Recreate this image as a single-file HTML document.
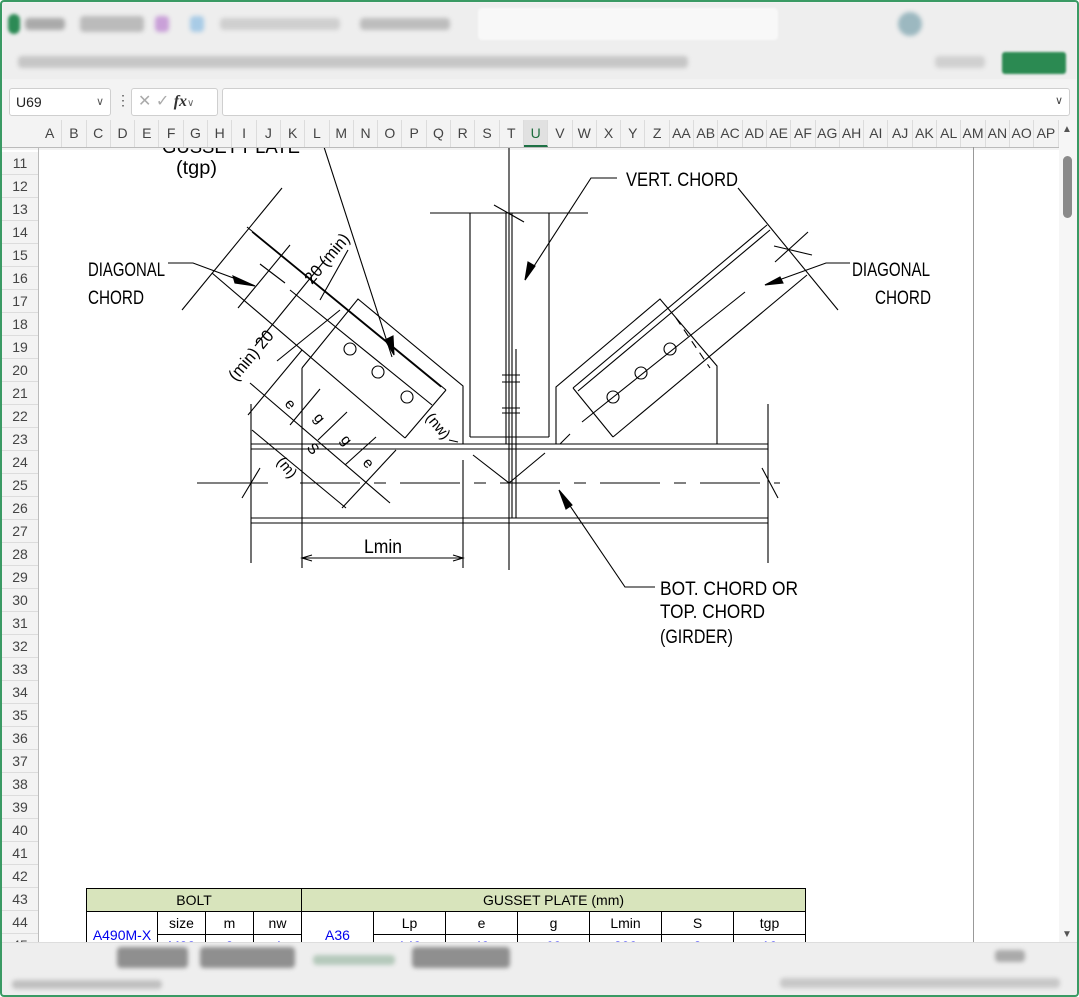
<!DOCTYPE html>
<html><head><meta charset="utf-8"><style>
*{margin:0;padding:0;box-sizing:border-box}
body{width:1079px;height:997px;overflow:hidden;background:#fff;font-family:"Liberation Sans",sans-serif;position:relative}
.abs{position:absolute}
.colh{position:absolute;top:120px;height:27px;font-size:14px;color:#444;text-align:center;line-height:27px;border-right:1px solid #dcdcdc}
.rowh{position:absolute;left:2px;width:36px;height:23px;font-size:14px;color:#444;text-align:center;line-height:23px;border-bottom:1px solid #dcdcdc}
.blob{position:absolute;background:#9a9a9a;border-radius:4px;filter:blur(2px)}
table{border-collapse:collapse;position:absolute;left:86px;top:888px;font-size:14px;table-layout:fixed}
td{border:1px solid #000;text-align:center;height:23px;padding:0}
.hd{background:#d8e4bc}
.b{color:#0000ee}
</style></head><body>
<div class="abs" style="left:2px;top:2px;width:1075px;height:78px;background:#eeeeee;filter:blur(0.5px)"></div>
<div class="abs" style="left:8px;top:14px;width:12px;height:20px;border-radius:6px;background:#2c8a55;filter:blur(1.5px)"></div>
<div class="blob" style="left:25px;top:18px;width:40px;height:12px;background:#aaa"></div>
<div class="blob" style="left:80px;top:16px;width:64px;height:16px;background:#bbb"></div>
<div class="blob" style="left:155px;top:16px;width:14px;height:16px;background:#c9a0d8"></div>
<div class="blob" style="left:190px;top:16px;width:14px;height:16px;background:#a8cbe6"></div>
<div class="blob" style="left:220px;top:18px;width:120px;height:12px;background:#cfcfcf"></div>
<div class="blob" style="left:360px;top:18px;width:90px;height:12px;background:#bdbdbd"></div>
<div class="abs" style="left:478px;top:8px;width:300px;height:32px;background:#f8f8f8;border-radius:4px;filter:blur(1px)"></div>
<div class="abs" style="left:898px;top:12px;width:24px;height:24px;border-radius:12px;background:#9cb8c0;filter:blur(2px)"></div>
<div class="blob" style="left:18px;top:56px;width:670px;height:12px;background:#c6c6c6"></div>
<div class="abs" style="left:1002px;top:52px;width:64px;height:22px;background:#2b8a52;border-radius:3px;filter:blur(1px)"></div>
<div class="blob" style="left:935px;top:56px;width:50px;height:12px;background:#d0d0d0"></div>
<div class="abs" style="left:2px;top:80px;width:1075px;height:70px;background:#f3f3f3"></div>
<div class="abs" style="left:9px;top:88px;width:102px;height:28px;background:#fff;border:1px solid #cfcfcf;border-radius:3px;font-size:14px;line-height:26px;padding-left:6px;color:#222">U69<span style="position:absolute;right:6px;font-size:11px;color:#555">&#8744;</span></div>
<div class="abs" style="left:116px;top:92px;font-size:14px;color:#555">&#8942;</div>
<div class="abs" style="left:131px;top:88px;width:87px;height:28px;background:#fff;border:1px solid #cfcfcf;border-radius:3px;font-size:16px;line-height:26px;color:#aaa;padding-left:6px">&#10005; &#10003; <i style="color:#333;font-family:'Liberation Serif',serif;font-weight:bold">fx</i><span style="font-size:10px;color:#666">&#8744;</span></div>
<div class="abs" style="left:222px;top:88px;width:848px;height:28px;background:#fff;border:1px solid #cfcfcf;border-radius:3px"><span style="position:absolute;right:6px;top:5px;font-size:11px;color:#444">&#8744;</span></div>
<div class="abs" style="left:2px;top:120px;width:36px;height:27px;background:#f3f3f3"></div>
<div id="cols"></div>
<div class="abs" style="left:2px;top:147px;width:1057px;height:1px;background:#bbb"></div>
<div class="abs" style="left:38px;top:147px;width:1px;height:795px;background:#bbb"></div>
<div class="abs" style="left:973px;top:147px;width:1px;height:795px;background:#999"></div>
<div class="abs" style="left:1059px;top:120px;width:18px;height:822px;background:#f6f6f6"></div>
<div class="abs" style="left:1063px;top:156px;width:9px;height:62px;background:#8a8a8a;border-radius:5px"></div>
<div class="abs" style="left:1062px;top:124px;font-size:10px;color:#555">&#9650;</div>
<div class="abs" style="left:1062px;top:929px;font-size:10px;color:#555">&#9660;</div>
<div id="rows"></div>
<svg class="abs" style="left:0;top:0" width="1079" height="942" viewBox="0 0 1079 942" stroke="#000" fill="none" stroke-width="1.1">
<defs><clipPath id="c"><rect x="39" y="148" width="934" height="794"/></clipPath></defs>
<g clip-path="url(#c)">
<text x="162" y="153" textLength="138" lengthAdjust="spacingAndGlyphs" fill="#000" stroke="none" font-size="19" font-family="Liberation Sans, sans-serif">GUSSET PLATE</text>
<line x1="251" y1="444" x2="768" y2="444"/><line x1="251" y1="449" x2="768" y2="449"/>
<line x1="251" y1="518" x2="768" y2="518"/><line x1="251" y1="523" x2="768" y2="523"/>
<line x1="251" y1="404" x2="251" y2="563"/><line x1="768" y1="404" x2="768" y2="563"/>
<line x1="302" y1="368" x2="302" y2="568"/><line x1="463" y1="460" x2="463" y2="568"/>
<line x1="197" y1="483" x2="268" y2="483"/>
<line x1="300" y1="483" x2="780" y2="483" stroke-dasharray="60,14,12,14"/>
<line x1="242" y1="498" x2="260" y2="468"/><line x1="762" y1="468" x2="778" y2="498"/>
<line x1="509" y1="148" x2="509" y2="570"/>
<line x1="430" y1="213" x2="588" y2="213"/>
<line x1="470" y1="213" x2="470" y2="437"/><line x1="549" y1="213" x2="549" y2="437"/>
<line x1="470" y1="437" x2="549" y2="437"/>
<line x1="506" y1="213" x2="506" y2="444"/><line x1="512" y1="213" x2="512" y2="518"/>
<line x1="516" y1="349" x2="516" y2="518"/>
<line x1="502" y1="375" x2="520" y2="375"/><line x1="502" y1="382" x2="520" y2="382"/>
<line x1="502" y1="408" x2="520" y2="408"/><line x1="502" y1="413" x2="520" y2="413"/>
<line x1="494" y1="205" x2="524" y2="222"/>
<line x1="473" y1="455" x2="509" y2="483"/><line x1="509" y1="483" x2="545" y2="453"/>
<polyline points="302,368 358,299 463,386 463,444"/>
<polyline points="556,444 556,387 660,299 717,366 717,444"/>
<line x1="247" y1="227" x2="446" y2="390"/><line x1="252" y1="232" x2="441" y2="387"/>
<line x1="446" y1="390" x2="405" y2="438"/>
<line x1="212" y1="273" x2="405" y2="438"/>
<line x1="182" y1="310" x2="282" y2="188"/>
<line x1="260" y1="264" x2="285" y2="283"/><line x1="290" y1="290" x2="432" y2="405" />
<line x1="238" y1="308" x2="290" y2="245"/><line x1="255" y1="346" x2="325" y2="260"/><line x1="320" y1="300" x2="348" y2="250"/>
<line x1="277" y1="361" x2="340" y2="310"/>
<line x1="248" y1="415" x2="302" y2="350"/><line x1="290" y1="425" x2="320" y2="389"/><line x1="318" y1="440" x2="347" y2="412"/><line x1="345" y1="465" x2="376" y2="437"/>
<line x1="250" y1="383" x2="390" y2="503"/><line x1="252" y1="430" x2="346" y2="508"/>
<line x1="342" y1="508" x2="396" y2="450"/>
<line x1="449" y1="440" x2="458" y2="442"/>
<circle cx="350" cy="349" r="6"/><circle cx="378" cy="372" r="6"/><circle cx="407" cy="397" r="6"/>
<line x1="324" y1="147" x2="392" y2="357"/>
<polygon points="385,340 394,355 393,336" fill="#000"/>
<polyline points="168,263 193,263 255,286"/>
<polygon points="233,276 255,286 235,283" fill="#000"/>
<line x1="767" y1="225" x2="573" y2="388"/><line x1="770" y1="230" x2="578" y2="391"/>
<line x1="573" y1="388" x2="613" y2="437"/>
<line x1="613" y1="437" x2="807" y2="275"/>
<line x1="738" y1="188" x2="838" y2="310"/>
<line x1="774" y1="246" x2="812" y2="255"/><line x1="775" y1="262" x2="808" y2="232"/>
<line x1="582" y1="422" x2="745" y2="292"/>
<line x1="676" y1="318" x2="710" y2="368" stroke-dasharray="8,6"/>
<line x1="560" y1="444" x2="570" y2="434"/>
<circle cx="670" cy="349" r="6"/><circle cx="641" cy="373" r="6"/><circle cx="613" cy="397" r="6"/>
<polyline points="617,178 591,178 525,280"/>
<polygon points="525,280 528,262 535,266" fill="#000"/>
<polyline points="850,263 826,263 765,285"/>
<polygon points="765,285 780,277 783,283" fill="#000"/>
<polyline points="655,587 625,587 562,494"/>
<polygon points="559,490 572,505 566,509" fill="#000"/>
<line x1="302" y1="558" x2="463" y2="558"/>
<polyline points="312,555 302,558 312,561"/><polyline points="453,555 463,558 453,561"/>
</g>
<g fill="#000" stroke="none" font-family="Liberation Sans, sans-serif" font-size="19">
<text x="88" y="276" textLength="77" lengthAdjust="spacingAndGlyphs">DIAGONAL</text>
<text x="88" y="304" textLength="56" lengthAdjust="spacingAndGlyphs">CHORD</text>
<text x="176" y="174" textLength="41" lengthAdjust="spacingAndGlyphs">(tgp)</text>
<text x="626" y="186" textLength="112" lengthAdjust="spacingAndGlyphs">VERT. CHORD</text>
<text x="852" y="276" textLength="78" lengthAdjust="spacingAndGlyphs">DIAGONAL</text>
<text x="875" y="304" textLength="56" lengthAdjust="spacingAndGlyphs">CHORD</text>
<text x="660" y="595" textLength="138" lengthAdjust="spacingAndGlyphs">BOT. CHORD OR</text>
<text x="660" y="618" textLength="105" lengthAdjust="spacingAndGlyphs">TOP. CHORD</text>
<text x="660" y="643" textLength="73" lengthAdjust="spacingAndGlyphs">(GIRDER)</text>
<text x="364" y="553" textLength="38" lengthAdjust="spacingAndGlyphs">Lmin</text>
<text font-size="17" transform="translate(312,285) rotate(-50)" textLength="60" lengthAdjust="spacingAndGlyphs">20 (min)</text>
<text font-size="17" transform="translate(236,382) rotate(-50)" textLength="60" lengthAdjust="spacingAndGlyphs">(min) 20</text>
<text font-size="15" transform="translate(284,404) rotate(50)">e</text>
<text font-size="15" transform="translate(313,418) rotate(50)">g</text>
<text font-size="15" transform="translate(340,440) rotate(50)">g</text>
<text font-size="15" transform="translate(362,463) rotate(50)">e</text>
<text font-size="15" transform="translate(425,418) rotate(50)">(nw)</text>
<text font-size="15" transform="translate(276,462) rotate(50)">(m)</text>
<text font-size="15" transform="translate(306,448) rotate(50)">S</text>
</g>
</svg>
<table>
<colgroup><col style="width:71px"><col style="width:48px"><col style="width:48px"><col style="width:48px"><col style="width:72px"><col style="width:72px"><col style="width:72px"><col style="width:72px"><col style="width:72px"><col style="width:72px"><col style="width:72px"></colgroup>
<tr><td colspan="4" class="hd">BOLT</td><td colspan="7" class="hd">GUSSET PLATE (mm)</td></tr>
<tr><td rowspan="2" class="b">A490M-X</td><td>size</td><td>m</td><td>nw</td><td rowspan="2" class="b">A36</td><td>Lp</td><td>e</td><td>g</td><td>Lmin</td><td>S</td><td>tgp</td></tr>
<tr><td class="b">M22</td><td class="b">3</td><td class="b">4</td><td class="b">140</td><td class="b">40</td><td class="b">60</td><td class="b">200</td><td class="b">3</td><td class="b">10</td></tr>
</table>
<div class="abs" style="left:2px;top:942px;width:1075px;height:53px;background:#eeeeee;border-top:1px solid #ddd"></div>
<div class="blob" style="left:117px;top:947px;width:71px;height:21px;background:#8f8f8f"></div>
<div class="blob" style="left:200px;top:947px;width:95px;height:21px;background:#8f8f8f"></div>
<div class="blob" style="left:313px;top:955px;width:82px;height:10px;background:#b5c9bb"></div>
<div class="blob" style="left:412px;top:947px;width:98px;height:21px;background:#8f8f8f"></div>
<div class="blob" style="left:12px;top:980px;width:150px;height:9px;background:#c0c0c0"></div>
<div class="blob" style="left:780px;top:978px;width:280px;height:10px;background:#c8c8c8"></div>
<div class="blob" style="left:995px;top:950px;width:30px;height:12px;background:#aaa"></div>
<div class="abs" style="left:0;top:0;width:1079px;height:997px;border:2px solid #3a9a64;border-radius:4px"></div>
<script>
var cols=[];var L="ABCDEFGHIJKLMNOPQRSTUVWXYZ";for(var i=0;i<26;i++)cols.push(L[i]);for(var i=0;i<16;i++)cols.push("A"+L[i]);
var h="";for(var i=0;i<cols.length;i++){var x=38+i*24.3;var sel=cols[i]=="U";h+='<div class="colh" style="left:'+x+'px;width:24.3px;'+(sel?'background:#e1e1e1;color:#1e6e3e;border-bottom:2px solid #1e7145':'background:#f3f3f3')+'">'+cols[i]+'</div>';}
document.getElementById("cols").innerHTML=h;
var r="";for(var n=11;n<=45;n++){var y=152+(n-11)*23;r+='<div class="rowh" style="top:'+y+'px;background:#f3f3f3">'+n+'</div>';}
document.getElementById("rows").innerHTML=r;
</script>
</body></html>
